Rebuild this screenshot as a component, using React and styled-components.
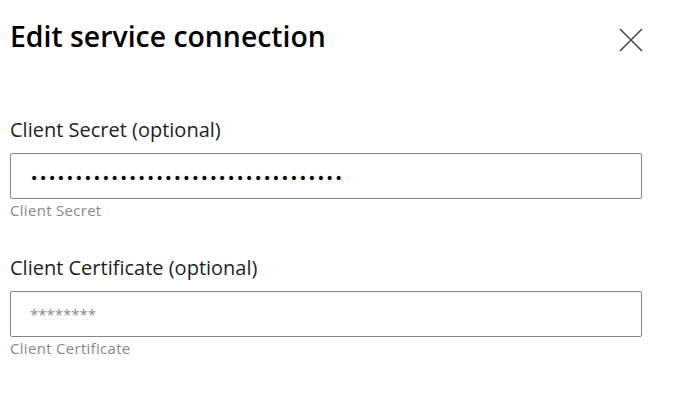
import React from "react";
import styled, { createGlobalStyle } from "styled-components";

const GlobalStyle = createGlobalStyle`
  body {
    margin: 0;
    background: #ffffff;
    font-family: "Open Sans", "Noto Sans", sans-serif;
    color: #201f1e;
  }
`;

function App() {
  return (
    <Panel>
      <GlobalStyle />
      <Header>
        <Title>Edit service connection</Title>
        <CloseButton aria-label="Close">
          <svg width="24" height="24" viewBox="0 0 24 24">
            <path d="M1 1 L23 23 M23 1 L1 23" stroke="#3b3a39" strokeWidth="1.4" fill="none" />
          </svg>
        </CloseButton>
      </Header>

      <Field>
        <Label>Client Secret (optional)</Label>
        <Input type="password" defaultValue={"a".repeat(35)} />
        <Helper>Client Secret</Helper>
      </Field>

      <Field>
        <Label>Client Certificate (optional)</Label>
        <Input type="text" placeholder="********" />
        <Helper>Client Certificate</Helper>
      </Field>
    </Panel>
  );
}

const Panel = styled.div`
  padding: 15px 31px 0 10px;
  width: 673px;
  box-sizing: border-box;
`;

const Header = styled.div`
  display: flex;
  align-items: center;
  justify-content: space-between;
  height: 42px;
  margin-bottom: 60px;
`;

const Title = styled.h1`
  margin: 0;
  font-size: 28.4px;
  line-height: 29px;
  font-weight: 600;
  color: #000;
`;

const CloseButton = styled.button`
  border: none;
  background: none;
  padding: 0;
  margin-right: -1px;
  width: 24px;
  height: 24px;
  margin-top: 8px;
  cursor: pointer;
`;

const Field = styled.div`
  display: flex;
  flex-direction: column;
  margin-bottom: 35px;
`;

const Label = styled.label`
  font-size: 20px;
  color: #201f1e;
  line-height: 26px;
  margin-bottom: 10px;
`;

const Input = styled.input`
  box-sizing: border-box;
  width: 632px;
  height: 46px;
  border: 1px solid #8a8886;
  border-radius: 2px;
  padding: 0 19px;
  font-family: "Open Sans", sans-serif;
  font-size: 15px;
  color: #000;
  outline: none;
  letter-spacing: 1.6px;

  &[type="password"] {
    font-family: "DejaVu Sans", sans-serif;
    font-size: 14px;
    letter-spacing: 0.7px;
    padding-top: 3px;
  }

  &::placeholder {
    color: #8a8886;
    letter-spacing: 0;
  }
`;

const Helper = styled.span`
  font-size: 15px;
  color: #8a8886;
  line-height: 20px;
  margin-top: 1px;
  letter-spacing: 0.3px;
`;

export default App;
